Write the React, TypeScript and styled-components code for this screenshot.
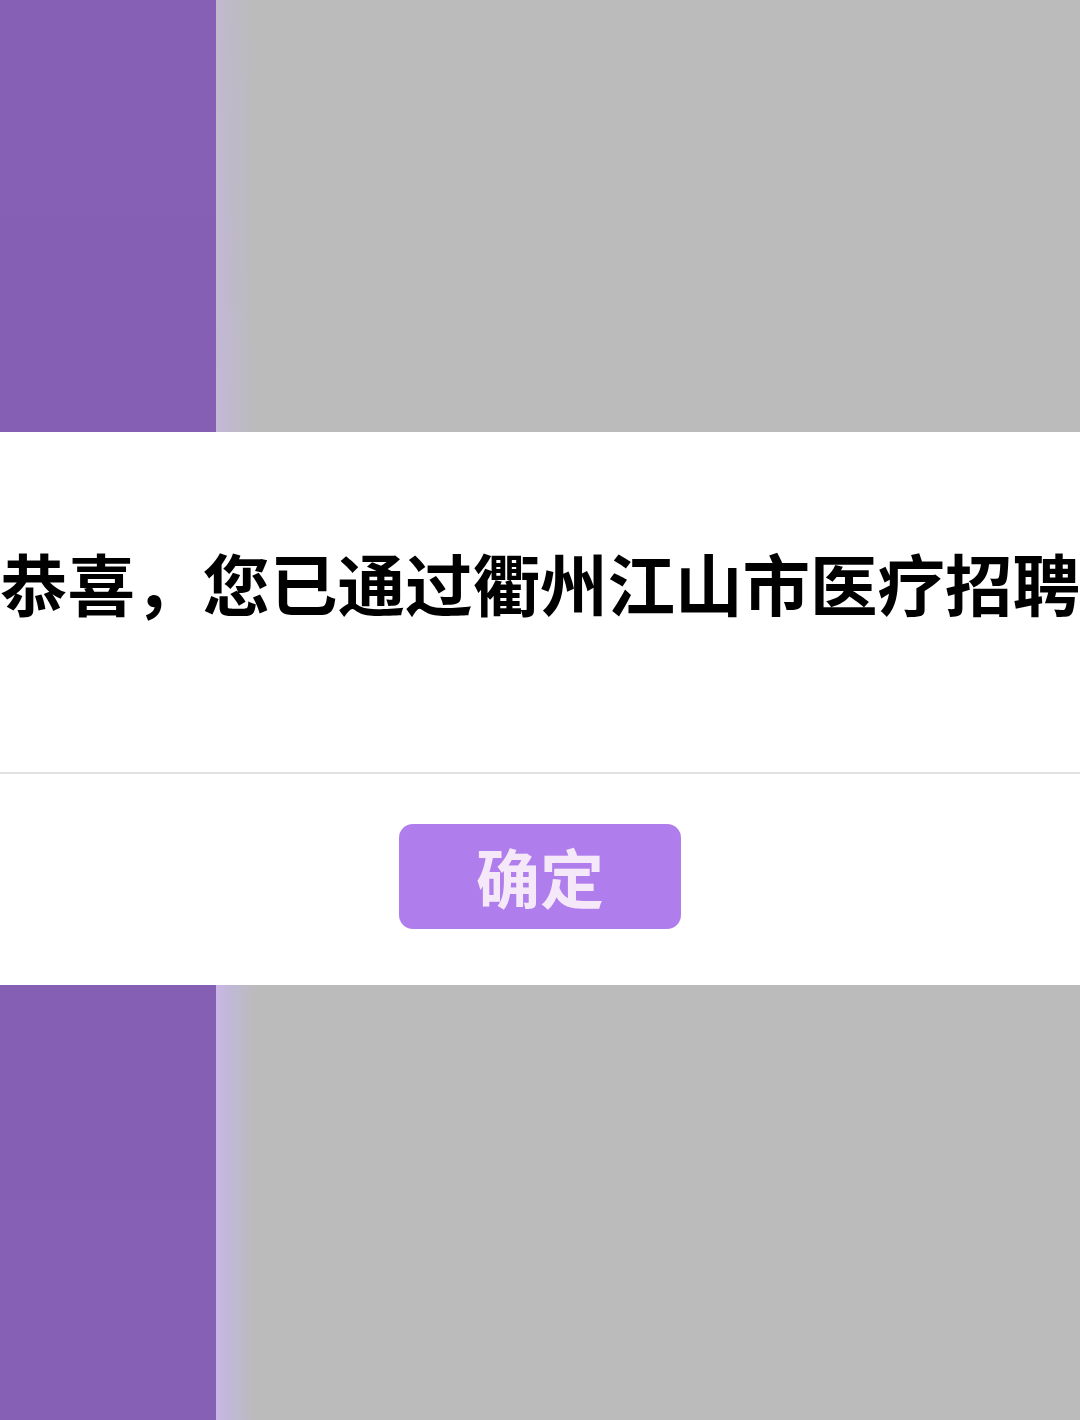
import React from 'react';
import styled, { createGlobalStyle } from 'styled-components';

const GlobalStyle = createGlobalStyle`
  html, body {
    margin: 0;
    padding: 0;
    background: #bbbbbb;
  }
  body {
    font-family: "Noto Sans CJK SC", "Noto Sans", sans-serif;
  }
`;

const Page = styled.div`
  position: relative;
  width: 1080px;
  height: 1420px;
  overflow: hidden;
  display: flex;
`;

const SideBar = styled.div`
  width: 216px;
  flex-shrink: 0;
  background: linear-gradient(180deg, #8660b4 0%, #835eb2 50%, #8560b4 100%);
`;

const Content = styled.div`
  flex: 1;
  background:
    linear-gradient(180deg, rgba(187, 187, 187, 0.55) 0%, rgba(187, 187, 187, 0) 70%),
    linear-gradient(90deg, #cbb6e6 0px, #c0b8d6 14px, #bbbbbb 40px, #bbbbbb 100%);
`;

const Dialog = styled.div`
  position: absolute;
  left: 0;
  right: 0;
  top: 432px;
  height: 553px;
  background: #ffffff;
  display: flex;
  flex-direction: column;
`;

const Body = styled.div`
  height: 340px;
  display: flex;
  align-items: center;
  justify-content: center;
  padding-bottom: 40px;
  box-sizing: border-box;
  overflow: hidden;
`;

const Message = styled.div`
  font-family: "Noto Sans CJK SC", "Noto Sans", sans-serif;
  font-weight: 700;
  font-size: 67.5px;
  line-height: 1;
  color: #000000;
  white-space: nowrap;
`;

const Divider = styled.div`
  height: 2px;
  background: #e2e2e2;
`;

const Footer = styled.div`
  flex: 1;
  display: flex;
  align-items: center;
  justify-content: center;
  padding-bottom: 6px;
`;

const ConfirmButton = styled.button`
  width: 282px;
  height: 105px;
  border: none;
  border-radius: 14px;
  background: #b07eec;
  color: #f5e9f9;
  font-family: "Noto Sans CJK SC", "Noto Sans", serif;
  font-weight: 700;
  font-size: 64px;
  line-height: 1;
  padding: 0 0 4px;
  cursor: pointer;
`;

const App: React.FC = () => {
  return (
    <>
      <GlobalStyle />
      <Page>
        <SideBar />
        <Content />
        <Dialog>
          <Body>
            <Message>恭喜，您已通过衢州江山市医疗招聘</Message>
          </Body>
          <Divider />
          <Footer>
            <ConfirmButton>确定</ConfirmButton>
          </Footer>
        </Dialog>
      </Page>
    </>
  );
};

export default App;
